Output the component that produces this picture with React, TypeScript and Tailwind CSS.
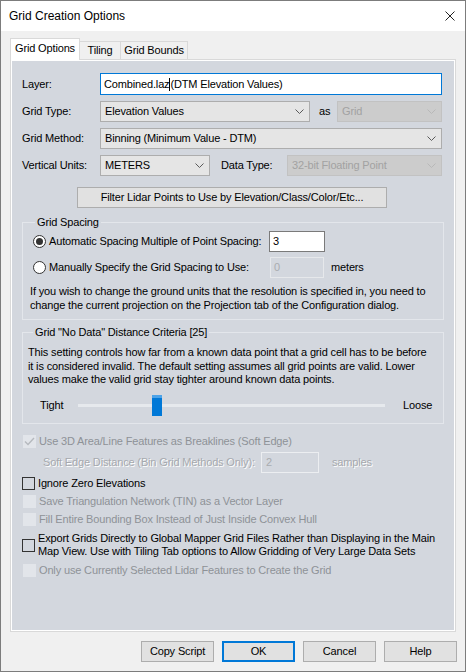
import React from "react";

function Chevron({ disabled }: { disabled?: boolean }) {
  return (
    <svg width="9" height="5" viewBox="0 0 9 5" className="flex-none">
      <path d="M0.5 0.5 L4.5 4.5 L8.5 0.5" fill="none" stroke={disabled ? "#b8b8b8" : "#5a5a5a"} strokeWidth="1" />
    </svg>
  );
}

function Select({ value, className, disabled }: { value: string; className: string; disabled?: boolean }) {
  return (
    <div
      className={`h-[21px] flex-none flex items-center justify-between pl-[4px] pr-[5px] border ${
        disabled ? "bg-[#cccccc] border-[#c2c2c2] text-[#a2a2a2]" : "bg-[#e5e5e5] border-[#adadad] text-black"
      } ${className}`}
    >
      <span className="whitespace-nowrap">{value}</span>
      <Chevron disabled={disabled} />
    </div>
  );
}

function Radio({ checked }: { checked?: boolean }) {
  return (
    <div className="w-[13px] h-[13px] flex-none rounded-full border border-[#333333] bg-white flex items-center justify-center">
      {checked && <div className="w-[7px] h-[7px] rounded-full bg-[#333333]" />}
    </div>
  );
}

function Check({ disabled, checked }: { disabled?: boolean; checked?: boolean }) {
  if (disabled) {
    return (
      <div className="w-[13px] h-[13px] flex-none bg-[#e2e5ea] flex items-center justify-center">
        {checked && (
          <svg width="11" height="9" viewBox="0 0 11 9">
            <path d="M1 4.5 L4 7.5 L10 1" fill="none" stroke="#b5b9be" strokeWidth="1.4" />
          </svg>
        )}
      </div>
    );
  }
  return <div className="w-[13px] h-[13px] flex-none border border-[#333333] bg-transparent" />;
}

export default function App() {
  const dis = "text-[#8e9297]";
  const emboss = "text-[#a6a9ae] [text-shadow:1px_1px_0_#ffffff]";
  return (
    <div className="w-[466px] h-[672px] border border-[#7c7c7c] bg-[#f0f0f0] flex flex-col font-['Liberation_Sans',Arial,sans-serif] text-[11px] tracking-[-0.15px] leading-[13px] text-black">
      {/* Title bar */}
      <div className="h-[30px] flex-none bg-white flex items-center justify-between pl-[8px] pr-[10px]">
        <span className="text-[12px] tracking-normal">Grid Creation Options</span>
        <svg width="10" height="10" viewBox="0 0 10 10">
          <path d="M0.5 0.5 L9.5 9.5 M9.5 0.5 L0.5 9.5" stroke="#222" strokeWidth="1" />
        </svg>
      </div>

      {/* Tabs */}
      <div className="h-[28px] flex-none flex items-end pl-[9px]">
        <div className="relative z-10 mb-[-1px] w-[70px] h-[22px] bg-white border border-b-0 border-[#d9d9d9] flex items-center justify-center pb-[2px]">
          Grid Options
        </div>
        <div className="w-[41px] h-[18px] bg-[#f0f0f0] border border-b-0 border-l-0 border-[#d9d9d9] flex items-center justify-center">
          Tiling
        </div>
        <div className="w-[67px] h-[18px] bg-[#f0f0f0] border border-b-0 border-l-0 border-[#d9d9d9] flex items-center justify-center">
          Grid Bounds
        </div>
      </div>

      {/* Panel */}
      <div className="ml-[9px] w-[446px] h-[573px] flex-none border border-[#d9d9d9] bg-[#d3d7de] shadow-[inset_0_0_0_1px_#ffffff] pl-[11px] pr-[13px] pt-[13px] flex flex-col items-start">
        {/* Layer */}
        <div className="flex items-center h-[22px]">
          <span className="w-[78px] flex-none">Layer:</span>
          <div className="w-[342px] h-[22px] bg-white border border-[#0078d7] flex items-center pl-[3px] whitespace-nowrap">
            Combined.laz<span className="inline-block w-[1px] h-[13px] bg-black" />(DTM Elevation Values)
          </div>
        </div>
        {/* Grid Type */}
        <div className="flex items-center h-[21px] mt-[6px]">
          <span className="w-[78px] flex-none">Grid Type:</span>
          <Select value="Elevation Values" className="w-[210px]" />
          <span className="ml-[9px] w-[18px] flex-none">as</span>
          <Select value="Grid" className="w-[105px]" disabled />
        </div>
        {/* Grid Method */}
        <div className="flex items-center h-[21px] mt-[6px]">
          <span className="w-[78px] flex-none">Grid Method:</span>
          <Select value="Binning (Minimum Value - DTM)" className="w-[342px]" />
        </div>
        {/* Vertical Units */}
        <div className="flex items-center h-[21px] mt-[6px]">
          <span className="w-[78px] flex-none">Vertical Units:</span>
          <Select value="METERS" className="w-[110px]" />
          <span className="ml-[11px] w-[66px] flex-none">Data Type:</span>
          <Select value="32-bit Floating Point" className="w-[155px]" disabled />
        </div>
        {/* Filter button */}
        <div className="mt-[11px] ml-[55px] w-[310px] h-[21px] bg-[#e1e1e1] border border-[#adadad] flex items-center justify-center">
          Filter Lidar Points to Use by Elevation/Class/Color/Etc...
        </div>

        {/* Grid Spacing group */}
        <fieldset className="mt-[8px] w-[422px] border border-[#e3e6eb] pl-[7px] pb-[7px]">
          <legend className="ml-[5px] px-[2px] leading-[13px]">Grid Spacing</legend>
          <div className="flex items-center h-[21px] mt-[2px] ml-[3px]">
            <div className="w-[236px] flex-none flex items-center gap-[3px]">
              <Radio checked />
              <span>Automatic Spacing Multiple of Point Spacing:</span>
            </div>
            <div className="w-[56px] h-[21px] bg-white border border-[#7a7a7a] flex items-center pl-[3px]">3</div>
          </div>
          <div className="flex items-center h-[21px] mt-[5px] ml-[3px]">
            <div className="w-[237px] flex-none flex items-center gap-[3px]">
              <Radio />
              <span>Manually Specify the Grid Spacing to Use:</span>
            </div>
            <div className="w-[54px] h-[21px] border border-[#e6e8eb] flex items-center pl-[3px] text-[#a9acb0]">0</div>
            <span className="ml-[7px]">meters</span>
          </div>
          <p className="mt-[6px] leading-[14px]">
            If you wish to change the ground units that the resolution is specified in, you need to
            <br />
            change the current projection on the Projection tab of the Configuration dialog.
          </p>
        </fieldset>

        {/* No Data group */}
        <fieldset className="mt-[6px] w-[422px] border border-[#e3e6eb] pl-[5px] pb-[7px]">
          <legend className="ml-[5px] px-[2px] leading-[13px]">Grid "No Data" Distance Criteria [25]</legend>
          <p className="mt-[7px] leading-[13.5px]">
            This setting controls how far from a known data point that a grid cell has to be before
            <br />
            it is considered invalid. The default setting assumes all grid points are valid. Lower
            <br />
            values make the valid grid stay tighter around known data points.
          </p>
          <div className="mt-[8px] h-[21px] flex items-center">
            <span className="ml-[12px] w-[38px] flex-none">Tight</span>
            <div className="relative w-[307px] h-[21px] flex-none flex items-center">
              <div className="w-full h-[3px] bg-[#e6e9ed]" />
              <div className="absolute left-[74px] top-0 w-[10px] h-[21px] bg-[#0078d7] border-t-[3px] border-[#4da3e8]" />
            </div>
            <span className="ml-[18px]">Loose</span>
          </div>
        </fieldset>

        {/* Checkboxes */}
        <div className="mt-[9px] h-[18px] flex items-center gap-[3px] ml-[1px]">
          <Check disabled checked />
          <span className={dis}>Use 3D Area/Line Features as Breaklines (Soft Edge)</span>
        </div>
        <div className="mt-[1px] h-[21px] flex items-center">
          <span className={`ml-[21px] w-[218px] flex-none ${emboss}`}>Soft Edge Distance (Bin Grid Methods Only):</span>
          <div className="w-[58px] h-[21px] border border-[#eceef1] flex items-center pl-[4px] text-[#a9acb0]">2</div>
          <span className={`ml-[13px] ${emboss}`}>samples</span>
        </div>
        <div className="mt-[2px] h-[18px] flex items-center gap-[3px]">
          <Check />
          <span>Ignore Zero Elevations</span>
        </div>
        <div className="h-[18px] flex items-center gap-[3px] ml-[1px]">
          <Check disabled />
          <span className={dis}>Save Triangulation Network (TIN) as a Vector Layer</span>
        </div>
        <div className="h-[18px] flex items-center gap-[3px] ml-[1px]">
          <Check disabled />
          <span className={dis}>Fill Entire Bounding Box Instead of Just Inside Convex Hull</span>
        </div>
        <div className="py-[3px] flex items-center gap-[3px]">
          <Check />
          <span className="leading-[13.5px]">
            Export Grids Directly to Global Mapper Grid Files Rather than Displaying in the Main
            <br />
            Map View. Use with Tiling Tab options to Allow Gridding of Very Large Data Sets
          </span>
        </div>
        <div className="h-[18px] flex items-center gap-[3px] ml-[1px]">
          <Check disabled />
          <span className={dis}>Only use Currently Selected Lidar Features to Create the Grid</span>
        </div>
      </div>

      {/* Buttons */}
      <div className="mt-[9px] h-[21px] flex-none flex justify-end gap-[8px] pr-[8px]">
        <div className="w-[73px] h-[21px] bg-[#e1e1e1] border border-[#adadad] flex items-center justify-center">Copy Script</div>
        <div className="w-[73px] h-[21px] bg-[#e1e1e1] border-2 border-[#0078d7] flex items-center justify-center">OK</div>
        <div className="w-[73px] h-[21px] bg-[#e1e1e1] border border-[#adadad] flex items-center justify-center">Cancel</div>
        <div className="w-[73px] h-[21px] bg-[#e1e1e1] border border-[#adadad] flex items-center justify-center">Help</div>
      </div>
    </div>
  );
}
